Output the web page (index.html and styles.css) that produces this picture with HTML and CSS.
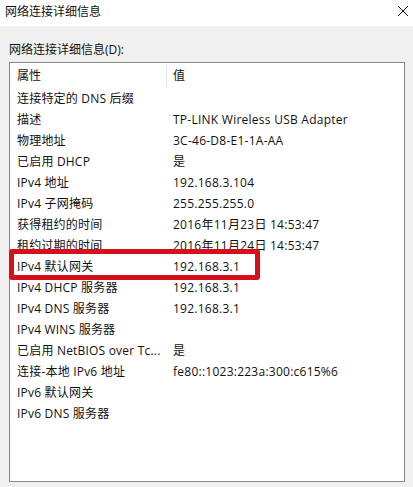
FILE: index.html
```html
<!DOCTYPE html>
<html lang="zh-CN">
<head>
<meta charset="utf-8">
<title>网络连接详细信息</title>
<link rel="stylesheet" href="styles.css">
</head>
<body>
<div class="window">
  <div class="titlebar">
    <span class="title">网络连接详细信息</span>
    <svg class="close" width="12" height="12" viewBox="0 0 12 12"><path d="M1 1L11 11M11 1L1 11" stroke="#111" stroke-width="1" fill="none"/></svg>
  </div>
  <div class="body">
    <div class="label">网络连接详细信息(D):</div>
    <div class="listbox">
      <div class="header">
        <div class="hcell">属性</div>
        <div class="hdiv"></div>
        <div class="hcell val">值</div>
      </div>
      <div class="rows">
        <div class="row"><span class="k">连接特定的 DNS 后缀</span><span class="v"></span></div>
        <div class="row"><span class="k">描述</span><span class="v">TP-LINK Wireless USB Adapter</span></div>
        <div class="row"><span class="k">物理地址</span><span class="v">3C-46-D8-E1-1A-AA</span></div>
        <div class="row"><span class="k">已启用 DHCP</span><span class="v">是</span></div>
        <div class="row"><span class="k">IPv4 地址</span><span class="v">192.168.3.104</span></div>
        <div class="row"><span class="k">IPv4 子网掩码</span><span class="v">255.255.255.0</span></div>
        <div class="row"><span class="k">获得租约的时间</span><span class="v">2016年11月23日 14:53:47</span></div>
        <div class="row"><span class="k">租约过期的时间</span><span class="v">2016年11月24日 14:53:47</span></div>
        <div class="row"><span class="k">IPv4 默认网关</span><span class="v">192.168.3.1</span></div>
        <div class="row"><span class="k">IPv4 DHCP 服务器</span><span class="v">192.168.3.1</span></div>
        <div class="row"><span class="k">IPv4 DNS 服务器</span><span class="v">192.168.3.1</span></div>
        <div class="row"><span class="k">IPv4 WINS 服务器</span><span class="v"></span></div>
        <div class="row"><span class="k">已启用 NetBIOS over Tc...</span><span class="v">是</span></div>
        <div class="row"><span class="k">连接-本地 IPv6 地址</span><span class="v">fe80::1023:223a:300:c615%6</span></div>
        <div class="row"><span class="k">IPv6 默认网关</span><span class="v"></span></div>
        <div class="row"><span class="k">IPv6 DNS 服务器</span><span class="v"></span></div>
      </div>
    </div>
  </div>
  <div class="highlight"></div>
</div>
</body>
</html>
```

FILE: styles.css
```css
html, body {
  margin: 0;
  padding: 0;
}
body {
  background: #f0f0f0;
  font-family: "Open Sans", "Noto Sans CJK SC", sans-serif;
  font-size: 12px;
  color: #111;
}
.window {
  position: relative;
  width: 413px;
  height: 487px;
  overflow: hidden;
}
.titlebar {
  height: 26px;
  background: #fff;
  display: flex;
  align-items: center;
  justify-content: space-between;
  padding: 0 4px 2px 5px;
  box-sizing: border-box;
}
.title {
  line-height: 16px;
}
.close {
  margin-top: -2px;
}
.body {
  padding: 16px 8px 0 9px;
}
.label {
  line-height: 16px;
  margin-bottom: 4px;
}
.listbox {
  width: 396px;
  height: 420px;
  box-sizing: border-box;
  border: 1px solid #8a8a8a;
  background: #fff;
}
.header {
  height: 25px;
  display: grid;
  grid-template-columns: 156px 1px 1fr;
  align-items: center;
}
.hcell {
  padding-left: 7px;
  line-height: 16px;
}
.hcell.val {
  padding-left: 6px;
}
.hdiv {
  height: 22px;
  background: #e3e3e3;
  align-self: start;
  margin-top: 2px;
}
.row {
  height: 21px;
  display: grid;
  grid-template-columns: 157px 1fr;
  align-items: center;
  line-height: 16px;
  white-space: nowrap;
}
.k {
  padding-left: 7px;
  overflow: hidden;
  letter-spacing: 0.2px;
}
.v {
  padding-left: 6px;
  letter-spacing: 0.25px;
}
.highlight {
  position: absolute;
  left: 9px;
  top: 249px;
  width: 251px;
  height: 31px;
  box-sizing: border-box;
  border: 5px solid #d6101a;
  border-radius: 3px;
}
```
